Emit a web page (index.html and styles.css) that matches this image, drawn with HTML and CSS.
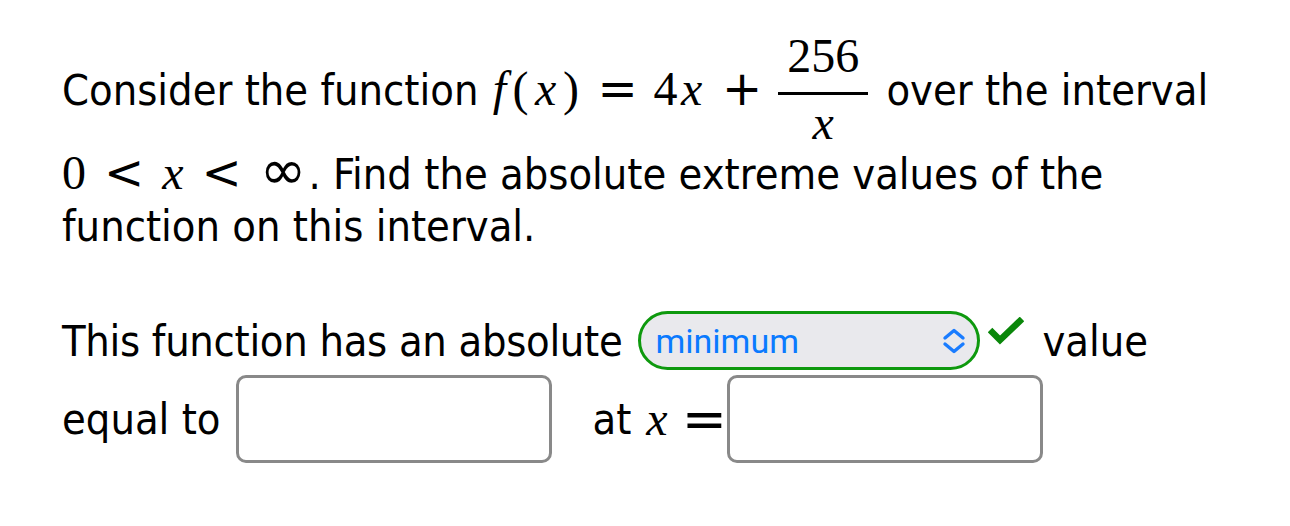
FILE: index.html
```html
<!DOCTYPE html>
<html lang="en">
<head>
<meta charset="utf-8">
<title>Absolute extreme values</title>
<link rel="stylesheet" href="styles.css">
</head>
<body>
<div class="page">
  <p class="intro">Consider the function <span class="m fx"><span class="mi">f</span>(<span class="mi">x</span>)<span class="op rel">=</span>4<span class="mi x2">x</span><span class="op bin">+</span></span><span class="frac m"><span class="num">256</span><span class="bar"></span><span class="den mi">x</span></span> over the interval <span class="m ineq"><span class="zero">0</span><span class="op rel">&lt;</span><span class="mi">x</span><span class="op rel">&lt;</span><span class="op inf">∞</span></span>. Find the absolute extreme values of the function on this interval.</p>

  <div class="row row-first">
    <span class="txt tight">This function has an absolute</span>
    <div class="select" role="combobox" aria-label="extreme type">
      <span class="select-value">minimum</span>
      <svg class="chev" width="24" height="26" viewBox="0 0 24 26" aria-hidden="true">
        <path d="M3 10 L12 2.5 L21 10" fill="none" stroke="#1a7cff" stroke-width="3.4" stroke-linecap="round" stroke-linejoin="round"/>
        <path d="M3 16 L12 23.5 L21 16" fill="none" stroke="#1a7cff" stroke-width="3.4" stroke-linecap="round" stroke-linejoin="round"/>
      </svg>
    </div>
    <svg class="check" width="36" height="28" viewBox="0 0 36 28" aria-hidden="true">
      <path d="M2 13 L12 23 L34 2" fill="none" stroke="#0a870a" stroke-width="6.5"/>
    </svg>
    <span class="txt value">value</span>
  </div>

  <div class="row row-second">
    <span class="txt">equal to</span>
    <input class="answer first" type="text" aria-label="value">
    <span class="txt at">at</span>
    <span class="m mi xvar">x</span>
    <span class="m op eq">=</span>
    <input class="answer" type="text" aria-label="x">
  </div>
</div>
</body>
</html>
```

FILE: styles.css
```css
body {
  margin: 0;
  background: #ffffff;
  color: #000000;
  font-family: "DejaVu Sans Condensed", "DejaVu Sans", sans-serif;
  font-stretch: condensed;
  font-size: 43px;
}

.page {
  padding: 34px 0 0 62px;
  width: 1170px;
}

.intro {
  margin: 0;
  line-height: 52px;
}

.m {
  font-family: "Liberation Serif", "DejaVu Serif", serif;
  font-stretch: normal;
  font-size: 48px;
  line-height: 1;
}

.fx {
  letter-spacing: 6.5px;
  margin-left: 2px;
}

.mi {
  font-style: italic;
}

.x2 {
  margin-left: -3px;
}

.op {
  font-family: "DejaVu Sans", sans-serif;
  font-style: normal;
  font-stretch: normal;
  font-size: 48px;
  line-height: 40px;
  letter-spacing: 0;
}

.rel {
  margin: 0 16px 0 12px;
}

.bin {
  margin: 0 0 0 13px;
}

.ineq .rel {
  margin: 0 18px;
}

.inf {
  font-size: 56px;
  margin-right: 2px;
}

.frac {
  display: inline-flex;
  flex-direction: column;
  align-items: center;
  vertical-align: 33px;
  margin: 0 6px 0 16px;
  letter-spacing: 0;
}

.num {
  line-height: 44px;
  padding: 0 9px 14px;
}

.bar {
  align-self: stretch;
  height: 3px;
  background: #000000;
}

.den {
  line-height: 44px;
  padding: 6px 0 3px;
}

.row {
  display: flex;
  align-items: center;
  line-height: 52px;
  white-space: nowrap;
}

.row-first {
  margin-top: 59px;
}

.row-second {
  margin-top: 5px;
}

.tight {
  letter-spacing: -0.3px;
}

.select {
  box-sizing: border-box;
  flex: none;
  width: 342px;
  height: 59px;
  margin-left: 16px;
  padding: 0 11px 0 14px;
  border: 3px solid #0e990e;
  border-radius: 30px;
  background: #e9e9ed;
  display: flex;
  align-items: center;
  justify-content: space-between;
  font-family: Roboto, "Noto Sans", sans-serif;
  font-stretch: normal;
  font-size: 34px;
  color: #0a7aff;
}

.select-value {
  line-height: 1;
}

.chev {
  display: block;
}

.check {
  display: block;
  flex: none;
  margin-left: 8px;
  margin-top: -20px;
}

.value {
  margin-left: 18px;
}

.answer {
  box-sizing: border-box;
  flex: none;
  width: 316px;
  height: 88px;
  margin: 0;
  border: 3px solid #898989;
  border-radius: 10px;
  background: #ffffff;
  font-size: 34px;
}

.answer.first {
  margin-left: 16px;
}

.at {
  margin-left: 40px;
}

.xvar {
  margin-left: 15px;
}

.eq {
  font-size: 54px;
  margin-left: 14px;
}
```
